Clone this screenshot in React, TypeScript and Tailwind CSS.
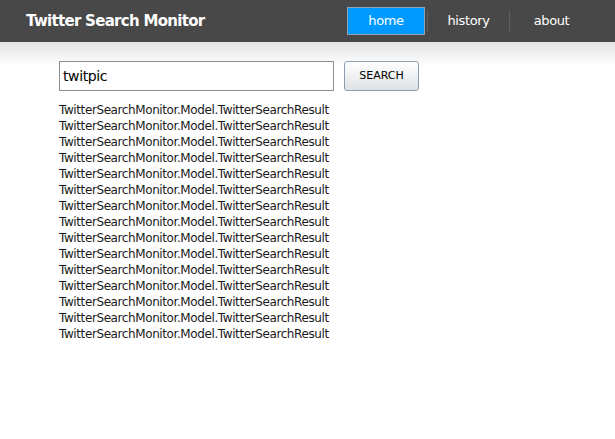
const results = Array.from({ length: 15 }, () => "TwitterSearchMonitor.Model.TwitterSearchResult");

export default function App() {
  return (
    <div className="w-[615px] h-[439px] bg-white font-['DejaVu_Sans',Verdana,sans-serif] overflow-hidden">
      <header className="h-[42px] bg-[#484848] flex items-center pl-[26px] pr-[22px]">
        <h1 className="text-white font-bold text-[15px] tracking-[-0.7px] pt-[1px]">Twitter Search Monitor</h1>
        <nav className="ml-auto flex items-center h-full pb-[1px] text-[13px] tracking-[-0.4px] text-white">
          <a className="w-[78px] h-[28px] flex items-center justify-center bg-[#0099ff] border border-[#8ca3b5]">home</a>
          <span className="w-px h-[22px] bg-[#5e5e5e] ml-[2px]"></span>
          <a className="w-[81px] h-[28px] flex items-center justify-center">history</a>
          <span className="w-px h-[22px] bg-[#5e5e5e]"></span>
          <a className="w-[83px] h-[28px] flex items-center justify-center">about</a>
        </nav>
      </header>
      <main className="bg-gradient-to-b from-[#e4e4e4] to-white to-[24px] bg-no-repeat pt-[19px] pl-[59px]">
        <div className="flex items-center gap-[10px]">
          <div className="w-[275px] h-[30px] border border-[#8e8f8f] bg-white flex items-center px-[3px] text-[14px] tracking-[-0.4px] text-black">
            twitpic
          </div>
          <button className="w-[75px] h-[30px] rounded-[3px] border border-[#8e9eac] bg-gradient-to-b from-white to-[#dfe3e6] text-[11px] text-black">
            SEARCH
          </button>
        </div>
        <ul className="mt-[11px] text-[12px] leading-[16px] tracking-[-0.4px] text-[#1a1a1a]">
          {results.map((r, i) => (
            <li key={i}>{r}</li>
          ))}
        </ul>
      </main>
    </div>
  );
}
